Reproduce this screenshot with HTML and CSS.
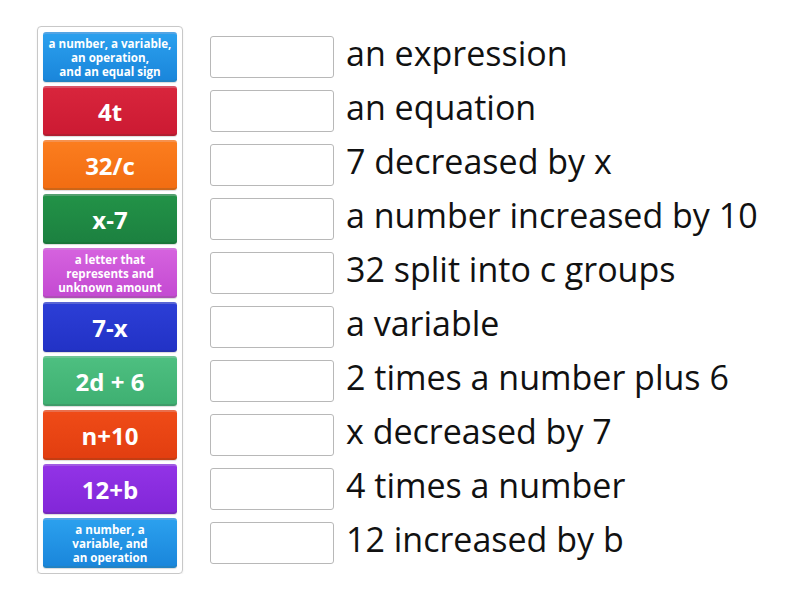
FILE: index.html
```html
<!DOCTYPE html>
<html>
<head>
<meta charset="utf-8">
<link rel="stylesheet" href="styles.css">
</head>
<body>
<div class="page">
  <div class="tiles">
    <div class="tile small c-blue">a number, a variable,<br>an operation,<br>and an equal sign</div>
    <div class="tile c-red">4t</div>
    <div class="tile c-orange">32/c</div>
    <div class="tile c-green">x-7</div>
    <div class="tile small c-pink">a letter that<br>represents and<br>unknown amount</div>
    <div class="tile c-navy">7-x</div>
    <div class="tile c-mint">2d + 6</div>
    <div class="tile c-scarlet">n+10</div>
    <div class="tile c-purple">12+b</div>
    <div class="tile small c-blue">a number, a<br>variable, and<br>an operation</div>
  </div>
  <div class="rows">
    <div class="row"><div class="slot"></div><div class="label">an expression</div></div>
    <div class="row"><div class="slot"></div><div class="label">an equation</div></div>
    <div class="row"><div class="slot"></div><div class="label">7 decreased by x</div></div>
    <div class="row"><div class="slot"></div><div class="label">a number increased by 10</div></div>
    <div class="row"><div class="slot"></div><div class="label">32 split into c groups</div></div>
    <div class="row"><div class="slot"></div><div class="label">a variable</div></div>
    <div class="row"><div class="slot"></div><div class="label">2 times a number plus 6</div></div>
    <div class="row"><div class="slot"></div><div class="label">x decreased by 7</div></div>
    <div class="row"><div class="slot"></div><div class="label">4 times a number</div></div>
    <div class="row"><div class="slot"></div><div class="label">12 increased by b</div></div>
  </div>
</div>
</body>
</html>
```
FILE: styles.css
```css
html, body {
  margin: 0;
  padding: 0;
  background: #fff;
  font-family: "Open Sans", "Liberation Sans", sans-serif;
}
.page {
  display: flex;
  align-items: flex-start;
  padding: 26px 0 0 37px;
  gap: 27px;
}
.tiles {
  width: 134px;
  padding: 5px;
  border: 1px solid #c8c8c8;
  border-radius: 4px;
  display: flex;
  flex-direction: column;
  gap: 4px;
  box-shadow: 0 1px 2px rgba(0,0,0,0.08);
}
.tile {
  height: 50px;
  box-sizing: border-box;
  border-radius: 3px;
  display: flex;
  align-items: center;
  justify-content: center;
  text-align: center;
  color: #fff;
  font-weight: 700;
  font-size: 24px;
  border-top: 2px solid rgba(255,255,255,0.25);
  border-bottom: 2px solid rgba(0,0,0,0.18);
  box-shadow: 0 1px 1px rgba(0,0,0,0.15);
  padding: 0 2px;
}
.tile.small {
  font-size: 11.6px;
  line-height: 13.8px;
  display: block;
  padding-top: 3px;
}
.c-blue { background: linear-gradient(#2ba0ee, #1a86db); }
.c-red { background: linear-gradient(#d8253c, #cc1a33); }
.c-orange { background: linear-gradient(#fb7d1e, #f26d12); }
.c-green { background: linear-gradient(#229247, #1c8140); }
.c-pink { background: linear-gradient(#d562de, #c44ad2); }
.c-navy { background: linear-gradient(#2c3ed6, #2232c6); }
.c-mint { background: linear-gradient(#4dbf80, #3fb072); }
.c-scarlet { background: linear-gradient(#ef4b17, #e23e10); }
.c-purple { background: linear-gradient(#9233e6, #8227d8); }
.rows {
  margin-top: 10px;
  display: flex;
  flex-direction: column;
  gap: 12px;
}
.row {
  display: flex;
  align-items: center;
  gap: 12px;
  height: 42px;
}
.slot {
  width: 124px;
  height: 42px;
  box-sizing: border-box;
  border: 1px solid #b8b8b8;
  border-radius: 3px;
  background: #fff;
}
.label {
  font-size: 34px;
  color: #111;
  white-space: nowrap;
  line-height: 42px;
  margin-top: -8px;
}
```
